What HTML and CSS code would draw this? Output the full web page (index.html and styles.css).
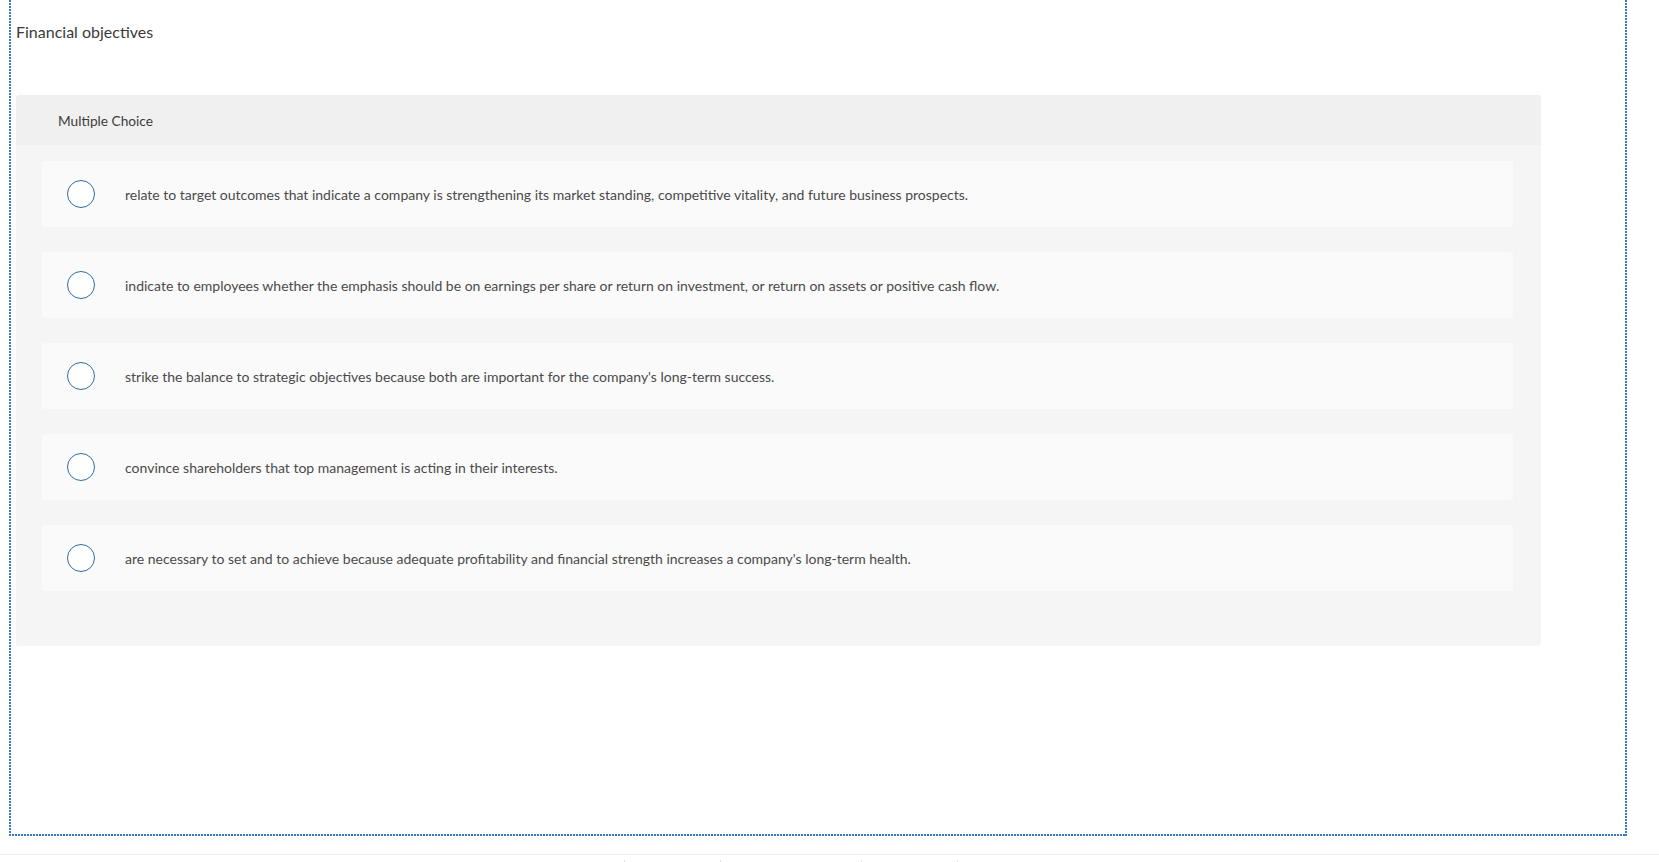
FILE: index.html
```html
<!DOCTYPE html>
<html lang="en">
<head>
<meta charset="utf-8">
<title>Financial objectives</title>
<link rel="stylesheet" href="styles.css">
</head>
<body>
<div class="frame">
  <p class="prompt">Financial objectives</p>
  <section class="mc">
    <header class="mc-head">Multiple Choice</header>
    <div class="mc-body">
      <label class="opt"><span class="radio"></span><span class="opt-text">relate to target outcomes that indicate a company is strengthening its market standing, competitive vitality, and future business prospects.</span></label>
      <label class="opt"><span class="radio"></span><span class="opt-text">indicate to employees whether the emphasis should be on earnings per share or return on investment, or return on assets or positive cash flow.</span></label>
      <label class="opt"><span class="radio"></span><span class="opt-text">strike the balance to strategic objectives because both are important for the company's long-term success.</span></label>
      <label class="opt"><span class="radio"></span><span class="opt-text">convince shareholders that top management is acting in their interests.</span></label>
      <label class="opt"><span class="radio"></span><span class="opt-text">are necessary to set and to achieve because adequate profitability and financial strength increases a company's long-term health.</span></label>
    </div>
  </section>
</div>
<div class="footer">
  <span class="tick t1"></span><span class="tick t2"></span><span class="tick t3"></span><span class="tick t4"></span>
</div>
</body>
</html>
```

FILE: styles.css
```css
html, body {
  margin: 0;
  padding: 0;
  background: #ffffff;
}
body {
  font-family: Lato, "Open Sans", "Liberation Sans", sans-serif;
  color: #3d3d3d;
}
.frame {
  margin-left: 9px;
  width: 1618px;
  box-sizing: border-box;
  padding: 22px 86px 190px 7px;
  background:
    linear-gradient(to bottom, #3a77c4 2px, transparent 2px) left top / 2px 3px repeat-y,
    linear-gradient(to bottom, #3a77c4 2px, transparent 2px) right top / 2px 3px repeat-y,
    linear-gradient(to right, #3a77c4 2px, transparent 2px) left bottom / 3px 2px repeat-x;
  background-color: #ffffff;
}
.prompt {
  margin: 0;
  font-size: 16px;
  line-height: 20px;
  color: #3a3a3a;
}
.mc {
  margin-top: 53px;
  width: 1525px;
  border-radius: 3px;
  overflow: hidden;
}
.mc-head {
  height: 50px;
  display: flex;
  align-items: center;
  padding-left: 42px;
  background: #f0f0f0;
  font-size: 13.7px;
  color: #3d3d3d;
}
.mc-body {
  background: #f5f5f5;
  padding: 16px 28px 55px 26px;
  display: flex;
  flex-direction: column;
  gap: 25px;
}
.opt {
  height: 66px;
  display: flex;
  align-items: center;
  background: #fafafa;
  border-radius: 3px;
  padding-left: 25px;
}
.radio {
  width: 28px;
  height: 28px;
  box-sizing: border-box;
  border: 1.5px solid #2e6ca5;
  border-radius: 50%;
  background: #ffffff;
  flex: none;
}
.opt-text {
  margin-left: 30px;
  font-size: 14px;
  color: #4a4a4a;
}
.footer {
  margin-top: 18px;
  border-top: 1px solid #eeeeee;
  height: 8px;
  position: relative;
}
.tick {
  position: absolute;
  top: 5px;
  width: 1px;
  height: 4px;
  background: #e4e4e4;
}
.t1 { left: 624px; }
.t2 { left: 720px; }
.t3 { left: 861px; }
.t4 { left: 957px; }
```
